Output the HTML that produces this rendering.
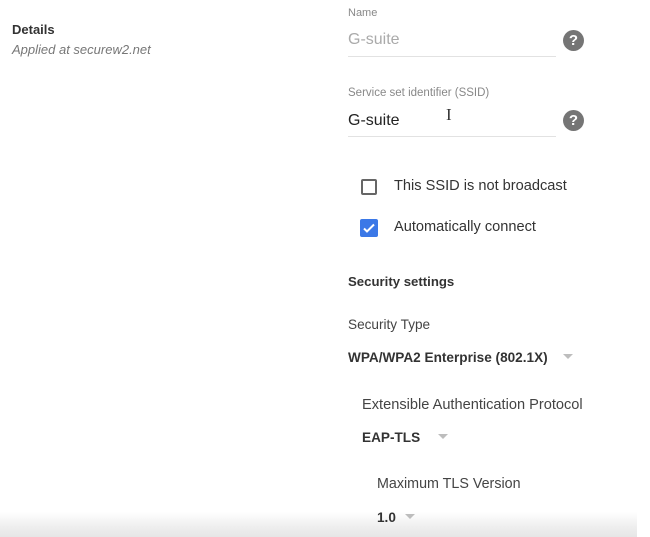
<!DOCTYPE html>
<html><head><meta charset="utf-8"><style>
body{margin:0;width:650px;height:537px;background:#fff;font-family:"Liberation Sans",sans-serif;position:relative;overflow:hidden;color:#222}
.a{position:absolute;white-space:nowrap}
.line{position:absolute;height:1px;background:#e2e2e2}
.q{position:absolute;width:21px;height:21px;border-radius:50%;background:#757575;color:#fff;font-weight:bold;font-size:15px;text-align:center;line-height:21px}
.tri{position:absolute;width:0;height:0;border-left:5px solid transparent;border-right:5px solid transparent;border-top:5px solid #bdbdbd}
</style></head><body>
<div class="a" style="left:12px;top:22px;font-size:13px;font-weight:bold;color:#333">Details</div>
<div class="a" style="left:12px;top:42px;font-size:13px;font-style:italic;color:#777">Applied at securew2.net</div>

<div class="a" style="left:348px;top:7px;font-size:11px;color:#888">Name</div>
<div class="a" style="left:348px;top:31px;font-size:16px;color:#aaa">G-suite</div>
<div class="line" style="left:348px;top:56px;width:208px"></div>
<div class="q" style="left:563px;top:30px">?</div>

<div class="a" style="left:348px;top:87px;font-size:11.5px;color:#888">Service set identifier (SSID)</div>
<div class="a" style="left:348px;top:112px;font-size:16px;color:#222">G-suite</div>
<div class="a" style="left:446px;top:105px;font-size:17px;color:#333;font-family:'Liberation Serif',serif">I</div>
<div class="line" style="left:348px;top:136px;width:208px"></div>
<div class="q" style="left:563px;top:110px">?</div>

<div style="position:absolute;left:361px;top:179px;width:16px;height:16px;border:2px solid #666;border-radius:2px;box-sizing:border-box"></div>
<div class="a" style="left:394px;top:178px;font-size:14.6px;color:#333">This SSID is not broadcast</div>
<div style="position:absolute;left:360px;top:219px;width:18px;height:18px;background:#3b78e7;border-radius:2px">
<svg width="18" height="18" viewBox="0 0 18 18"><path d="M4 9.5l3 3 7-7" stroke="#fff" stroke-width="2" fill="none"/></svg></div>
<div class="a" style="left:394px;top:219px;font-size:14.6px;color:#333">Automatically connect</div>

<div class="a" style="left:348px;top:274px;font-size:13.2px;font-weight:bold;color:#333">Security settings</div>
<div class="a" style="left:348px;top:317px;font-size:13.6px;color:#444">Security Type</div>
<div class="a" style="left:348px;top:350px;font-size:13.6px;font-weight:bold;color:#333">WPA/WPA2 Enterprise (802.1X)</div>
<div class="tri" style="left:563px;top:354px"></div>

<div class="a" style="left:362px;top:397px;font-size:14.6px;color:#444">Extensible Authentication Protocol</div>
<div class="a" style="left:362px;top:430px;font-size:13.6px;font-weight:bold;color:#333">EAP-TLS</div>
<div class="tri" style="left:438px;top:434px"></div>

<div style="position:absolute;left:0;top:512px;width:637px;height:25px;background:linear-gradient(#fff,#eee 60%,#e6e6e6)"></div>
<div class="a" style="left:377px;top:476px;font-size:14.3px;color:#444">Maximum TLS Version</div>
<div class="a" style="left:377px;top:510px;font-size:13.6px;font-weight:bold;color:#333">1.0</div>
<div class="tri" style="left:405px;top:514px"></div>
</body></html>
